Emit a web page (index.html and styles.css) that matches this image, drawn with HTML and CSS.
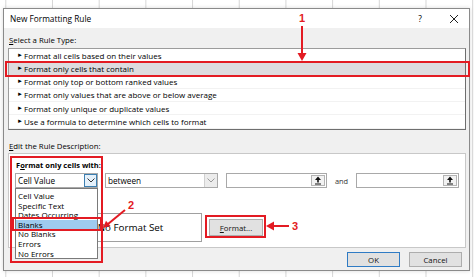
FILE: index.html
```html
<!DOCTYPE html>
<html lang="en">
<head>
    <meta charset="UTF-8">
    <title>New Formatting Rule</title>
    <link rel="stylesheet" href="styles.css">
</head>
<body>
    <div class="dialog">
        <div class="titlebar">
            <span class="title">New Formatting Rule</span>
            <span class="help">?</span>
            <span class="close">
                <svg width="10" height="10" viewBox="0 0 10 10"><path d="M1 1 L9 9 M9 1 L1 9" stroke="#222" stroke-width="1"/></svg>
            </span>
        </div>
        <div class="content">
            <div class="label"><u>S</u>elect a Rule Type:</div>
            <ul class="rule-list">
                <li><span class="bullet">&#9658;</span>Format all cells based on their values</li>
                <li class="selected"><span class="bullet">&#9658;</span>Format only cells that contain</li>
                <li><span class="bullet">&#9658;</span>Format only top or bottom ranked values</li>
                <li><span class="bullet">&#9658;</span>Format only values that are above or below average</li>
                <li><span class="bullet">&#9658;</span>Format only unique or duplicate values</li>
                <li><span class="bullet">&#9658;</span>Use a formula to determine which cells to format</li>
            </ul>
            <div class="label label-edit"><u>E</u>dit the Rule Description:</div>
            <div class="desc">
                <div class="desc-title">F<u>o</u>rmat only cells with:</div>
                <div class="controls">
                    <div class="select select-cell">
                        <span class="select-text">Cell Value</span>
                        <span class="drop-btn active">
                            <svg width="8" height="5" viewBox="0 0 8 5"><path d="M0.5 0.5 L4 4 L7.5 0.5" fill="none" stroke="#333" stroke-width="1"/></svg>
                        </span>
                    </div>
                    <div class="select select-op">
                        <span class="select-text">between</span>
                        <span class="drop-btn disabled">
                            <svg width="8" height="5" viewBox="0 0 8 5"><path d="M0.5 0.5 L4 4 L7.5 0.5" fill="none" stroke="#9a9a9a" stroke-width="1"/></svg>
                        </span>
                    </div>
                    <div class="ref-input ref-1">
                        <span class="ref-btn">
                            <svg width="8" height="9" viewBox="0 0 8 9"><path d="M4 0.5 L1 4 H3.2 V6.5 H4.8 V4 H7 Z" fill="#111"/><rect x="1" y="7.5" width="6" height="1" fill="#111"/></svg>
                        </span>
                    </div>
                    <span class="and">and</span>
                    <div class="ref-input ref-2">
                        <span class="ref-btn">
                            <svg width="8" height="9" viewBox="0 0 8 9"><path d="M4 0.5 L1 4 H3.2 V6.5 H4.8 V4 H7 Z" fill="#111"/><rect x="1" y="7.5" width="6" height="1" fill="#111"/></svg>
                        </span>
                    </div>
                </div>
                <div class="preview-row">
                    <span class="preview-label">Preview:</span>
                    <div class="preview">No Format Set</div>
                    <button class="btn format-btn"><u>F</u>ormat...</button>
                </div>
            </div>
            <div class="buttons">
                <button class="btn ok-btn">OK</button>
                <button class="btn">Cancel</button>
            </div>
        </div>
    </div>

    <!-- opened combo list -->
    <ul class="dropdown-list">
        <li>Cell Value</li>
        <li>Specific Text</li>
        <li>Dates Occurring</li>
        <li class="picked">Blanks</li>
        <li>No Blanks</li>
        <li>Errors</li>
        <li>No Errors</li>
    </ul>

    <!-- red annotations -->
    <div class="mark mark-rule"></div>
    <div class="mark mark-with"></div>
    <div class="mark mark-blanks"></div>
    <div class="mark mark-format"></div>
    <svg class="arrows" width="474" height="277" viewBox="0 0 474 277">
        <line x1="302" y1="26" x2="302" y2="54" stroke="#e31b23" stroke-width="2"/>
        <polygon points="297.5,53 306.5,53 302,61" fill="#e31b23"/>
        <line x1="125" y1="210" x2="108" y2="224" stroke="#e31b23" stroke-width="2"/>
        <polygon points="103,228 110.6,226.1 106,220.7" fill="#e31b23"/>
        <line x1="289" y1="226" x2="272" y2="226" stroke="#e31b23" stroke-width="2"/>
        <polygon points="266,226 274,221.5 274,230.5" fill="#e31b23"/>
    </svg>
    <span class="num num-1">1</span>
    <span class="num num-2">2</span>
    <span class="num num-3">3</span>
</body>
</html>
```

FILE: styles.css
```css
body {
    margin: 0;
    width: 474px;
    height: 277px;
    overflow: hidden;
    position: relative;
    padding: 8px 0 0 3px;
    box-sizing: border-box;
    font-family: "Open Sans", "Noto Sans", sans-serif;
    font-size: 7.8px;
    color: #000;
    background-color: #fff;
    background-image: linear-gradient(90deg, #d6d6d6 1px, transparent 1px);
    background-size: 46.7px 100%;
    background-position: 5.3px 0;
}
u { text-decoration-thickness: 1px; text-underline-offset: 1px; }
.dialog {
    width: 467px;
    height: 263px;
    box-sizing: border-box;
    border: 1px solid #8a8a8a;
    background-color: #f0f0f0;
    box-shadow: 0 0 4px rgba(0, 0, 0, 0.15);
    display: flex;
    flex-direction: column;
}
.titlebar {
    height: 19px;
    background-color: #fff;
    display: flex;
    align-items: center;
}
.title {
    flex: 1;
    padding-left: 6px;
    font-size: 8.3px;
}
.help {
    width: 22px;
    margin-right: 8px;
    text-align: center;
    font-size: 8.4px;
}
.close {
    width: 30px;
    display: flex;
    justify-content: center;
}
.content {
    padding: 0 3px 0 4px;
    display: flex;
    flex-direction: column;
}
.label {
    margin-top: 7px;
    line-height: 11px;
    padding-left: 1px;
}
.label-edit { margin-top: 11px; }
.rule-list {
    list-style: none;
    margin: 2px 0 0;
    padding: 0;
    height: 82px;
    box-sizing: border-box;
    background-color: #fff;
    border: 1px solid #9c9c9c;
    border-right-color: #6e6e6e;
    border-bottom-color: #6e6e6e;
    font-size: 8px;
}
.rule-list li {
    height: 13.3px;
    line-height: 13.3px;
    padding-left: 8px;
    display: flex;
    align-items: center;
    border-bottom: 1px solid #f2f2f2;
    box-sizing: border-box;
}
.rule-list li.selected { background-color: #dddcdf; }
.bullet {
    font-size: 6px;
    width: 6px;
    margin-right: 1px;
}
.desc {
    margin-top: 1px;
    height: 95px;
    box-sizing: border-box;
    background-color: #fff;
    border: 1px solid #c8c8c8;
    padding: 6px 6px 0;
}
.desc-title {
    font-weight: bold;
    font-size: 7.5px;
    line-height: 10px;
    padding-left: 1px;
}
.controls {
    margin-top: 3px;
    display: flex;
    align-items: center;
    height: 15px;
}
.select {
    height: 15px;
    box-sizing: border-box;
    border: 1px solid #a9a9a9;
    display: flex;
    align-items: center;
    background-color: #fff;
}
.select-cell { width: 83px; }
.select-op { width: 113px; margin-left: 7px; }
.select-text {
    flex: 1;
    padding-left: 2px;
    font-size: 8.2px;
}
.drop-btn {
    width: 13px;
    height: 13px;
    box-sizing: border-box;
    display: flex;
    align-items: center;
    justify-content: center;
}
.drop-btn.active {
    background-color: #e5f1fb;
    border: 1px solid #3c7fb1;
}
.drop-btn.disabled {
    background-color: #ececec;
    border-left: 1px solid #d0d0d0;
}
.ref-input {
    height: 15px;
    box-sizing: border-box;
    border: 1px solid #a9a9a9;
    display: flex;
    justify-content: flex-end;
    align-items: center;
    padding-right: 1px;
}
.ref-1 { width: 101px; margin-left: 8px; }
.ref-2 { width: 103px; }
.ref-btn {
    width: 14px;
    height: 11px;
    box-sizing: border-box;
    border: 1px solid #b4b4b4;
    background-color: #f2f2f2;
    display: flex;
    align-items: center;
    justify-content: center;
}
.and {
    width: 15px;
    margin: 0 7px;
    text-align: center;
    font-size: 7.4px;
    color: #333;
}
.preview-row {
    margin-top: 25px;
    display: flex;
    align-items: center;
}
.preview-label { width: 38px; }
.preview {
    width: 149px;
    height: 29px;
    box-sizing: border-box;
    border: 1px solid #a0a0a0;
    padding-left: 6px;
    display: flex;
    align-items: center;
    justify-content: center;
    font-size: 9.8px;
}
.btn {
    font-family: "Open Sans", "Noto Sans", sans-serif;
    font-size: 7.8px;
    color: #111;
    background-color: #e1e1e1;
    border: 1px solid #adadad;
    padding: 0;
    height: 15px;
    width: 53px;
}
.format-btn {
    margin-left: 7px;
    width: 54px;
    height: 17px;
}
.buttons {
    margin-top: 4px;
    margin-right: 4px;
    display: flex;
    justify-content: flex-end;
    gap: 9px;
}
.ok-btn { border-color: #2f7bc4; }
.dropdown-list {
    position: absolute;
    left: 15px;
    top: 188px;
    width: 83px;
    height: 71px;
    box-sizing: border-box;
    margin: 0;
    padding: 2px 0 0;
    list-style: none;
    background-color: #fff;
    border: 1px solid #7a7a7a;
    font-size: 8px;
}
.dropdown-list li {
    height: 9.6px;
    line-height: 9.6px;
    padding-left: 2px;
}
.dropdown-list li.picked { background-color: #9fcbef; }
.mark {
    position: absolute;
    border: 2px solid #e31b23;
    box-sizing: border-box;
}
.mark-rule { left: 5px; top: 61px; width: 465px; height: 16px; }
.mark-with { left: 10px; top: 156px; width: 93px; height: 107px; }
.mark-blanks { left: 12px; top: 217px; width: 90px; height: 14px; }
.mark-format { left: 205px; top: 215px; width: 61px; height: 23px; }
.arrows {
    position: absolute;
    left: 0;
    top: 0;
    pointer-events: none;
}
.num {
    position: absolute;
    font-family: "Liberation Sans", Arial, sans-serif;
    font-weight: bold;
    font-size: 11px;
    line-height: 11px;
    color: #e31b23;
}
.num-1 { left: 299px; top: 13px; }
.num-2 { left: 128px; top: 200px; }
.num-3 { left: 292px; top: 221px; }
```
